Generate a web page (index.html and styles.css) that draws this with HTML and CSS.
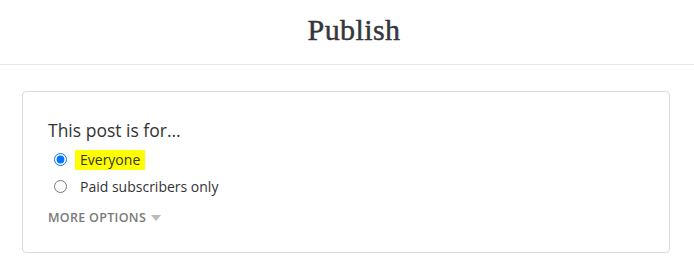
FILE: index.html
```html
<!DOCTYPE html>
<html>
<head>
<meta charset="utf-8">
<link rel="stylesheet" href="styles.css">
</head>
<body>
<header class="header">
  <h1 class="title">Publish</h1>
</header>
<main class="main">
  <section class="card">
    <h2 class="card-title">This post is for...</h2>
    <label class="option">
      <input type="radio" name="audience" checked>
      <span class="label highlight">Everyone</span>
    </label>
    <label class="option">
      <input type="radio" name="audience">
      <span class="label">Paid subscribers only</span>
    </label>
    <div class="more">MORE OPTIONS <span class="caret"></span></div>
  </section>
</main>
</body>
</html>
```
FILE: styles.css
```css
html, body {
  margin: 0;
  padding: 0;
  background: #fff;
}
body {
  font-family: "Open Sans", "Noto Sans", sans-serif;
  color: #333;
}
.header {
  border-bottom: 1px solid #e8e8e8;
  display: flex;
  justify-content: center;
  padding-left: 14px;
  box-sizing: border-box;
  height: 65px;
}
.title {
  margin: 0;
  padding-top: 12px;
  font-family: "Liberation Serif", "DejaVu Serif", serif;
  font-weight: normal;
  font-size: 30px;
  line-height: 36px;
  letter-spacing: 0.4px;
  color: #34363c;
  -webkit-text-stroke: 0.45px #34363c;
}
.main {
  padding: 26px 24px 0 22px;
}
.card {
  border: 1px solid #dcdcdc;
  border-radius: 4px;
  height: 162px;
  box-sizing: border-box;
  padding: 26px 25px 0 25px;
}
.card-title {
  margin: 0 0 4px 0;
  font-size: 17.5px;
  font-weight: normal;
  line-height: 24px;
  color: #333;
}
.option {
  display: flex;
  align-items: center;
  height: 27px;
  font-size: 14px;
  color: #333;
}
.option input {
  margin: 0 13px 0 6px;
  width: 13px;
  height: 13px;
}
.highlight {
  background: #ffff00;
  line-height: 20px;
  padding: 0 5px;
  margin-left: -5px;
}
.more {
  margin-top: 9px;
  font-size: 12.5px;
  font-weight: 600;
  color: #7a7a7a;
  letter-spacing: 0.3px;
  display: flex;
  align-items: center;
  gap: 5px;
}
.caret {
  width: 0;
  height: 0;
  border-left: 5px solid transparent;
  border-right: 5px solid transparent;
  border-top: 6px solid #bbb;
}
```
